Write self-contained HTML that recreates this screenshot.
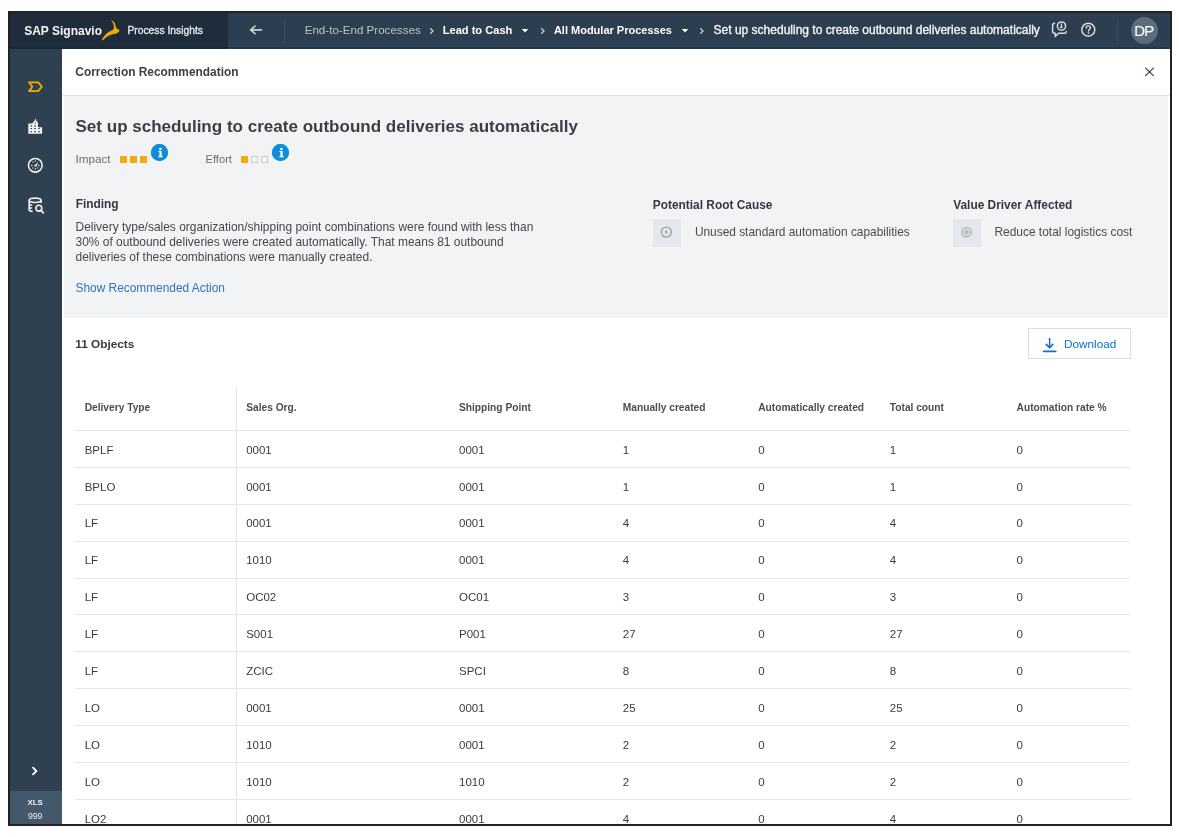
<!DOCTYPE html>
<html><head><meta charset="utf-8">
<style>
*{margin:0;padding:0;box-sizing:border-box}
html,body{width:1179px;height:837px;overflow:hidden;background:#fff;font-family:"Liberation Sans",sans-serif;color:#32363a}
.t{position:absolute;white-space:nowrap;line-height:1}
.r{position:absolute}
.sq{position:absolute;width:7px;height:7px;background:#f3a90f}
.sqo{position:absolute;width:7px;height:7px;border:1px solid #c9cbcd;background:#f4f5f6}
.info{position:absolute;width:17px;height:17px;border-radius:50%;background:#1b90d8}
.ibox{position:absolute;width:28px;height:28px;background:#e4e7eb}
.hl{position:absolute;left:75px;width:1055px;height:1px;background:#e5e6e7}
</style></head><body>
<div id="app" style="position:absolute;left:0;top:0;width:1179px;height:837px;will-change:transform">
<div class="r" style="left:10px;top:13px;width:1160px;height:36px;background:#2d3e50"></div>
<div class="r" style="left:10px;top:13px;width:218px;height:36px;background:#1e2c3c"></div>
<div class="r" style="left:10px;top:49px;width:52px;height:776px;background:#2f4051"></div>
<div class="r" style="left:10px;top:791px;width:52px;height:34px;background:#44586c"></div>
<div class="t" style="left:27.5px;top:799px;font-size:7.9px;font-weight:bold;color:#eef1f4;">XLS</div>

<div class="t" style="left:27.9px;top:812px;font-size:8.75px;color:#e6eaee;">999</div>

<div class="r" style="left:228px;top:42px;width:942px;height:5px;background:#2f4255"></div>
<div class="r" style="left:228px;top:47px;width:942px;height:2px;background:#28394b"></div>
<div class="r" style="left:10px;top:47px;width:218px;height:2px;background:#1a2735"></div>
<div class="r" style="left:62px;top:95px;width:1108px;height:1px;background:#dfe1e4"></div>
<div class="r" style="left:64px;top:96px;width:1104px;height:222px;background:#f2f3f5"></div>
<div class="t" style="left:24.2px;top:25px;font-size:12px;font-weight:bold;color:#f4f6f8;">SAP Signavio</div>

<div class="t" style="left:127.4px;top:26px;font-size:10.3px;color:#e6ebef;-webkit-text-stroke:0.3px #e6ebef">Process Insights</div>

<div class="t" style="left:304.7px;top:24px;font-size:11.6px;color:#b9c3cc;">End-to-End Processes</div>

<div class="t" style="left:442.7px;top:25px;font-size:11.1px;font-weight:bold;color:#ffffff;">Lead to Cash</div>

<div class="t" style="left:553.9px;top:25px;font-size:11.0px;font-weight:bold;color:#ffffff;">All Modular Processes</div>

<div class="t" style="left:713.6px;top:24px;font-size:12px;color:#f2f5f7;-webkit-text-stroke:0.35px #f2f5f7">Set up scheduling to create outbound deliveries automatically</div>

<div class="r" style="left:284px;top:19px;width:1px;height:24px;background:#3a4b5c"></div>
<div class="r" style="left:1117px;top:19px;width:1px;height:24px;background:#3a4b5c"></div>
<div class="r" style="left:1131px;top:17px;width:27px;height:27px;border-radius:50%;background:#5b6c7d"></div>
<div class="t" style="left:1134.2px;top:23px;font-size:15px;color:#f4f6f8;letter-spacing:-0.8px;-webkit-text-stroke:0.2px #f4f6f8">DP</div>

<div class="t" style="left:75.3px;top:67px;font-size:11.9px;font-weight:bold;color:#3a3f45;">Correction Recommendation</div>

<div class="t" style="left:75.5px;top:118px;font-size:17.05px;font-weight:bold;color:#3a3f45;">Set up scheduling to create outbound deliveries automatically</div>

<div class="t" style="left:75.5px;top:153px;font-size:11.7px;color:#6a6d70;">Impact</div>

<div class="t" style="left:205.6px;top:154px;font-size:11.1px;color:#6a6d70;">Effort</div>

<div class="sq" style="left:119.5px;top:156px"></div>
<div class="sq" style="left:129.8px;top:156px"></div>
<div class="sq" style="left:140px;top:156px"></div>
<div class="sq" style="left:241.3px;top:156px"></div>
<div class="sqo" style="left:251.4px;top:156px"></div>
<div class="sqo" style="left:261px;top:156px"></div>
<div class="info" style="left:151.2px;top:143.8px"></div>
<div class="info" style="left:272.2px;top:143.8px"></div>
<div class="t" style="left:75.7px;top:199px;font-size:11.9px;font-weight:bold;color:#363a40;">Finding</div>

<div class="t" style="left:75.5px;top:222px;font-size:11.96px;color:#44484d;">Delivery type/sales organization/shipping point combinations were found with less than</div>

<div class="t" style="left:75.5px;top:237px;font-size:11.96px;color:#44484d;">30% of outbound deliveries were created automatically. That means 81 outbound</div>

<div class="t" style="left:75.5px;top:252px;font-size:11.96px;color:#44484d;">deliveries of these combinations were manually created.</div>

<div class="t" style="left:75.5px;top:283px;font-size:11.9px;color:#3171bd;">Show Recommended Action</div>

<div class="t" style="left:652.8px;top:200px;font-size:11.9px;font-weight:bold;color:#363a40;">Potential Root Cause</div>

<div class="ibox" style="left:653px;top:218.5px"></div>
<div class="t" style="left:694.9px;top:227px;font-size:11.9px;color:#484c50;">Unused standard automation capabilities</div>

<div class="t" style="left:953.2px;top:200px;font-size:11.9px;font-weight:bold;color:#363a40;">Value Driver Affected</div>

<div class="ibox" style="left:953px;top:218.5px"></div>
<div class="t" style="left:994.4px;top:227px;font-size:11.94px;color:#484c50;">Reduce total logistics cost</div>

<div class="t" style="left:75.3px;top:339px;font-size:11.8px;font-weight:bold;color:#363a40;">11 Objects</div>

<div class="r" style="left:1028px;top:328px;width:103px;height:31px;border:1px solid #dcdddf;background:#fff"></div>
<div class="t" style="left:1064px;top:338px;font-size:11.76px;color:#0a6ed1;">Download</div>

<div class="t" style="left:84.7px;top:403px;font-size:10.2px;font-weight:bold;color:#4a4e53;">Delivery Type</div>

<div class="t" style="left:246.2px;top:403px;font-size:10.2px;font-weight:bold;color:#4a4e53;">Sales Org.</div>

<div class="t" style="left:459px;top:403px;font-size:10.2px;font-weight:bold;color:#4a4e53;">Shipping Point</div>

<div class="t" style="left:622.8px;top:403px;font-size:10.2px;font-weight:bold;color:#4a4e53;">Manually created</div>

<div class="t" style="left:758.2px;top:403px;font-size:10.2px;font-weight:bold;color:#4a4e53;">Automatically created</div>

<div class="t" style="left:889.8px;top:403px;font-size:10.2px;font-weight:bold;color:#4a4e53;">Total count</div>

<div class="t" style="left:1016.6px;top:403px;font-size:10.2px;font-weight:bold;color:#4a4e53;">Automation rate %</div>

<div class="r" style="left:235.5px;top:387px;width:1px;height:438px;background:#e5e6e7"></div>
<div class="hl" style="top:429.8px"></div>
<div class="hl" style="top:466.7px"></div>
<div class="hl" style="top:503.6px"></div>
<div class="hl" style="top:540.6px"></div>
<div class="hl" style="top:577.5px"></div>
<div class="hl" style="top:614.4px"></div>
<div class="hl" style="top:651.3px"></div>
<div class="hl" style="top:688.2px"></div>
<div class="hl" style="top:725.2px"></div>
<div class="hl" style="top:762.1px"></div>
<div class="hl" style="top:799.0px"></div>
<div class="t" style="left:84.7px;top:445px;font-size:11.5px;color:#383c40;">BPLF</div>

<div class="t" style="left:246.2px;top:445px;font-size:11.5px;color:#383c40;">0001</div>

<div class="t" style="left:459px;top:445px;font-size:11.5px;color:#383c40;">0001</div>

<div class="t" style="left:622.8px;top:445px;font-size:11.5px;color:#383c40;">1</div>

<div class="t" style="left:758.2px;top:445px;font-size:11.5px;color:#383c40;">0</div>

<div class="t" style="left:889.8px;top:445px;font-size:11.5px;color:#383c40;">1</div>

<div class="t" style="left:1016.6px;top:445px;font-size:11.5px;color:#383c40;">0</div>

<div class="t" style="left:84.7px;top:482px;font-size:11.5px;color:#383c40;">BPLO</div>

<div class="t" style="left:246.2px;top:482px;font-size:11.5px;color:#383c40;">0001</div>

<div class="t" style="left:459px;top:482px;font-size:11.5px;color:#383c40;">0001</div>

<div class="t" style="left:622.8px;top:482px;font-size:11.5px;color:#383c40;">1</div>

<div class="t" style="left:758.2px;top:482px;font-size:11.5px;color:#383c40;">0</div>

<div class="t" style="left:889.8px;top:482px;font-size:11.5px;color:#383c40;">1</div>

<div class="t" style="left:1016.6px;top:482px;font-size:11.5px;color:#383c40;">0</div>

<div class="t" style="left:84.7px;top:518px;font-size:11.5px;color:#383c40;">LF</div>

<div class="t" style="left:246.2px;top:518px;font-size:11.5px;color:#383c40;">0001</div>

<div class="t" style="left:459px;top:518px;font-size:11.5px;color:#383c40;">0001</div>

<div class="t" style="left:622.8px;top:518px;font-size:11.5px;color:#383c40;">4</div>

<div class="t" style="left:758.2px;top:518px;font-size:11.5px;color:#383c40;">0</div>

<div class="t" style="left:889.8px;top:518px;font-size:11.5px;color:#383c40;">4</div>

<div class="t" style="left:1016.6px;top:518px;font-size:11.5px;color:#383c40;">0</div>

<div class="t" style="left:84.7px;top:555px;font-size:11.5px;color:#383c40;">LF</div>

<div class="t" style="left:246.2px;top:555px;font-size:11.5px;color:#383c40;">1010</div>

<div class="t" style="left:459px;top:555px;font-size:11.5px;color:#383c40;">0001</div>

<div class="t" style="left:622.8px;top:555px;font-size:11.5px;color:#383c40;">4</div>

<div class="t" style="left:758.2px;top:555px;font-size:11.5px;color:#383c40;">0</div>

<div class="t" style="left:889.8px;top:555px;font-size:11.5px;color:#383c40;">4</div>

<div class="t" style="left:1016.6px;top:555px;font-size:11.5px;color:#383c40;">0</div>

<div class="t" style="left:84.7px;top:592px;font-size:11.5px;color:#383c40;">LF</div>

<div class="t" style="left:246.2px;top:592px;font-size:11.5px;color:#383c40;">OC02</div>

<div class="t" style="left:459px;top:592px;font-size:11.5px;color:#383c40;">OC01</div>

<div class="t" style="left:622.8px;top:592px;font-size:11.5px;color:#383c40;">3</div>

<div class="t" style="left:758.2px;top:592px;font-size:11.5px;color:#383c40;">0</div>

<div class="t" style="left:889.8px;top:592px;font-size:11.5px;color:#383c40;">3</div>

<div class="t" style="left:1016.6px;top:592px;font-size:11.5px;color:#383c40;">0</div>

<div class="t" style="left:84.7px;top:629px;font-size:11.5px;color:#383c40;">LF</div>

<div class="t" style="left:246.2px;top:629px;font-size:11.5px;color:#383c40;">S001</div>

<div class="t" style="left:459px;top:629px;font-size:11.5px;color:#383c40;">P001</div>

<div class="t" style="left:622.8px;top:629px;font-size:11.5px;color:#383c40;">27</div>

<div class="t" style="left:758.2px;top:629px;font-size:11.5px;color:#383c40;">0</div>

<div class="t" style="left:889.8px;top:629px;font-size:11.5px;color:#383c40;">27</div>

<div class="t" style="left:1016.6px;top:629px;font-size:11.5px;color:#383c40;">0</div>

<div class="t" style="left:84.7px;top:666px;font-size:11.5px;color:#383c40;">LF</div>

<div class="t" style="left:246.2px;top:666px;font-size:11.5px;color:#383c40;">ZCIC</div>

<div class="t" style="left:459px;top:666px;font-size:11.5px;color:#383c40;">SPCI</div>

<div class="t" style="left:622.8px;top:666px;font-size:11.5px;color:#383c40;">8</div>

<div class="t" style="left:758.2px;top:666px;font-size:11.5px;color:#383c40;">0</div>

<div class="t" style="left:889.8px;top:666px;font-size:11.5px;color:#383c40;">8</div>

<div class="t" style="left:1016.6px;top:666px;font-size:11.5px;color:#383c40;">0</div>

<div class="t" style="left:84.7px;top:703px;font-size:11.5px;color:#383c40;">LO</div>

<div class="t" style="left:246.2px;top:703px;font-size:11.5px;color:#383c40;">0001</div>

<div class="t" style="left:459px;top:703px;font-size:11.5px;color:#383c40;">0001</div>

<div class="t" style="left:622.8px;top:703px;font-size:11.5px;color:#383c40;">25</div>

<div class="t" style="left:758.2px;top:703px;font-size:11.5px;color:#383c40;">0</div>

<div class="t" style="left:889.8px;top:703px;font-size:11.5px;color:#383c40;">25</div>

<div class="t" style="left:1016.6px;top:703px;font-size:11.5px;color:#383c40;">0</div>

<div class="t" style="left:84.7px;top:740px;font-size:11.5px;color:#383c40;">LO</div>

<div class="t" style="left:246.2px;top:740px;font-size:11.5px;color:#383c40;">1010</div>

<div class="t" style="left:459px;top:740px;font-size:11.5px;color:#383c40;">0001</div>

<div class="t" style="left:622.8px;top:740px;font-size:11.5px;color:#383c40;">2</div>

<div class="t" style="left:758.2px;top:740px;font-size:11.5px;color:#383c40;">0</div>

<div class="t" style="left:889.8px;top:740px;font-size:11.5px;color:#383c40;">2</div>

<div class="t" style="left:1016.6px;top:740px;font-size:11.5px;color:#383c40;">0</div>

<div class="t" style="left:84.7px;top:777px;font-size:11.5px;color:#383c40;">LO</div>

<div class="t" style="left:246.2px;top:777px;font-size:11.5px;color:#383c40;">1010</div>

<div class="t" style="left:459px;top:777px;font-size:11.5px;color:#383c40;">1010</div>

<div class="t" style="left:622.8px;top:777px;font-size:11.5px;color:#383c40;">2</div>

<div class="t" style="left:758.2px;top:777px;font-size:11.5px;color:#383c40;">0</div>

<div class="t" style="left:889.8px;top:777px;font-size:11.5px;color:#383c40;">2</div>

<div class="t" style="left:1016.6px;top:777px;font-size:11.5px;color:#383c40;">0</div>

<div class="t" style="left:84.7px;top:814px;font-size:11.5px;color:#383c40;">LO2</div>

<div class="t" style="left:246.2px;top:814px;font-size:11.5px;color:#383c40;">0001</div>

<div class="t" style="left:459px;top:814px;font-size:11.5px;color:#383c40;">0001</div>

<div class="t" style="left:622.8px;top:814px;font-size:11.5px;color:#383c40;">4</div>

<div class="t" style="left:758.2px;top:814px;font-size:11.5px;color:#383c40;">0</div>

<div class="t" style="left:889.8px;top:814px;font-size:11.5px;color:#383c40;">4</div>

<div class="t" style="left:1016.6px;top:814px;font-size:11.5px;color:#383c40;">0</div>

<svg class="r" style="left:98px;top:17px;" width="26" height="26" viewBox="0 0 26 26"><path d="M13 3.6 C14.8 3.9 16.3 5 17 6.8 C17.6 8.4 17.8 10 18.6 11.4 L21.8 13.3 L20.2 15.2 L18.8 16.6 C16.5 17 14.5 17.3 12.5 18 C10.2 18.7 8.2 20 6.8 21.4 L4.6 23.6 L3.8 22.6 C5 20.6 6.3 18.6 8 17 C10 15.2 12.3 13.9 14.8 13 C15.9 12 16.1 10.5 15.9 9 C15.6 7 14.6 5 13 3.6 Z" fill="#f0ab00"/></svg>
<svg class="r" style="left:246px;top:22px;" width="20" height="16" viewBox="0 0 20 16"><path d="M9 4.2 L4.6 7.9 L9 11.7 M4.8 7.9 H15.4" fill="none" stroke="#c5cdd5" stroke-width="1.7" stroke-linecap="round" stroke-linejoin="round"/></svg>
<svg class="r" style="left:428.8px;top:27px;" width="6" height="8" viewBox="0 0 6 8"><path d="M1.6 1.6 L4 4 L1.6 6.4" fill="none" stroke="#d0d6dc" stroke-width="1.3" stroke-linecap="round"/></svg>
<svg class="r" style="left:540.4px;top:27px;" width="6" height="8" viewBox="0 0 6 8"><path d="M1.6 1.6 L4 4 L1.6 6.4" fill="none" stroke="#d0d6dc" stroke-width="1.3" stroke-linecap="round"/></svg>
<svg class="r" style="left:699.3px;top:27px;" width="6" height="8" viewBox="0 0 6 8"><path d="M1.6 1.6 L4 4 L1.6 6.4" fill="none" stroke="#d0d6dc" stroke-width="1.3" stroke-linecap="round"/></svg>
<svg class="r" style="left:520.6px;top:27px;" width="8" height="7" viewBox="0 0 8 7"><path d="M0.8 2 H7.2 L4 5.6 Z" fill="#ffffff"/></svg>
<svg class="r" style="left:680.8px;top:27px;" width="8" height="7" viewBox="0 0 8 7"><path d="M0.8 2 H7.2 L4 5.6 Z" fill="#ffffff"/></svg>
<svg class="r" style="left:1050px;top:19px;" width="20" height="20" viewBox="0 0 20 20"><circle cx="11.5" cy="7" r="4.1" fill="none" stroke="#d5dce2" stroke-width="1.5"/><path d="M11.4 4.6 V8.2 M9.9 8.3 H12.6" fill="none" stroke="#d5dce2" stroke-width="1.2"/><path d="M4.6 4.2 C3.2 4.4 2.6 5 2.6 6.4 V12.6 C2.6 13.6 3.3 14.2 4.6 14.2 L5.2 14.2 L5.2 17.4 L8.6 14.2 H14.6 C15.8 14.2 16.2 13.6 16.2 12.4" fill="none" stroke="#d5dce2" stroke-width="1.5" stroke-linejoin="round" stroke-linecap="round"/></svg>
<svg class="r" style="left:1079px;top:20px;" width="19" height="19" viewBox="0 0 19 19"><circle cx="9.3" cy="9.7" r="6.5" fill="none" stroke="#d5dce2" stroke-width="1.5"/><path d="M7.2 8 C7.2 6.6 8.2 5.9 9.3 5.9 C10.5 5.9 11.4 6.7 11.4 7.8 C11.4 9.2 9.5 9.4 9.5 11.1" fill="none" stroke="#d5dce2" stroke-width="1.4" stroke-linecap="round"/><circle cx="9.5" cy="13.1" r="0.9" fill="#d5dce2"/></svg>
<svg class="r" style="left:25px;top:79px;" width="20" height="15" viewBox="0 0 20 15"><path d="M4 3.3 H13.1 L16.9 7.7 L13.1 12.1 H4 L7.3 7.7 Z" fill="none" stroke="#f0ab00" stroke-width="1.8" stroke-linejoin="round"/></svg>
<svg class="r" style="left:24px;top:114px;" width="24" height="24" viewBox="0 0 24 24"><path d="M11.5 4 L12.2 6.8 C13.4 7.5 14 8.6 14 10 V13.2 H18.1 V19.8 H4.3 V9.6 H8.6 C8.9 8.3 9.7 7.2 10.8 6.8 Z" fill="#f2f4f6"/><g fill="#3a4a5a"><rect x="6.5" y="11.2" width="1.6" height="1.4"/><rect x="10.3" y="11.2" width="1.6" height="1.4"/><rect x="10.7" y="8.3" width="1.2" height="1.2"/><rect x="6.5" y="14" width="1.6" height="1.2"/><rect x="10.3" y="14" width="1.6" height="1.2"/><rect x="14.2" y="14" width="1.6" height="1.2"/><rect x="6.5" y="17" width="1.6" height="1.3"/><rect x="10.3" y="17" width="1.6" height="1.3"/><rect x="14.2" y="17" width="1.6" height="1.3"/></g></svg>
<svg class="r" style="left:24px;top:153px;" width="24" height="24" viewBox="0 0 24 24"><circle cx="11.3" cy="12.25" r="6.85" fill="none" stroke="#eef1f4" stroke-width="1.55"/><path d="M9.9 13 L14.2 8.8 L12.3 14.1 Z" fill="#eef1f4"/><g fill="#c9d0d7"><circle cx="7.8" cy="12.4" r="0.8"/><circle cx="14.8" cy="12.4" r="0.8"/><circle cx="9" cy="9" r="0.7"/><circle cx="11.3" cy="8" r="0.7"/><circle cx="8.8" cy="14.9" r="0.7"/><circle cx="11.3" cy="15.9" r="0.8"/><circle cx="13.8" cy="14.9" r="0.7"/></g></svg>
<svg class="r" style="left:24px;top:193px;" width="24" height="24" viewBox="0 0 24 24"><ellipse cx="11.1" cy="7.3" rx="5.9" ry="2.2" fill="none" stroke="#eef1f4" stroke-width="1.7"/><path d="M5.2 7.3 V16.8 C5.2 17.7 6.6 18.3 8.6 18.5" fill="none" stroke="#eef1f4" stroke-width="1.7"/><path d="M17 7.3 V10" fill="none" stroke="#eef1f4" stroke-width="1.7"/><path d="M5.6 12 H8.2 M5.6 15 H8.2" stroke="#eef1f4" stroke-width="1.3"/><circle cx="14.9" cy="15.2" r="2.9" fill="none" stroke="#eef1f4" stroke-width="1.6"/><path d="M16.9 17.3 L19.4 19.9" stroke="#eef1f4" stroke-width="1.7" stroke-linecap="round"/></svg>
<svg class="r" style="left:29px;top:765px;" width="12" height="12" viewBox="0 0 12 12"><path d="M4 2.6 L7.4 6 L4 9.4" fill="none" stroke="#ffffff" stroke-width="1.8" stroke-linecap="round" stroke-linejoin="round"/></svg>
<svg class="r" style="left:1141px;top:63px;" width="17" height="17" viewBox="0 0 17 17"><path d="M4.6 5.1 L12.4 12.6 M12.4 5.1 L4.6 12.6" stroke="#3b4a58" stroke-width="1.3" stroke-linecap="round"/></svg>
<svg class="r" style="left:151.1px;top:143.9px;" width="17" height="17" viewBox="0 0 17 17"><circle cx="8.5" cy="8.5" r="8.5" fill="#0e8dd9"/><circle cx="9.4" cy="5" r="1.25" fill="#fff"/><path d="M7.4 7 H10.6 V12.2 H11.8 V13.3 H7.2 V12.2 H8.4 V8.1 H7.4 Z" fill="#fff"/></svg>
<svg class="r" style="left:272.2px;top:143.9px;" width="17" height="17" viewBox="0 0 17 17"><circle cx="8.5" cy="8.5" r="8.5" fill="#0e8dd9"/><circle cx="9.4" cy="5" r="1.25" fill="#fff"/><path d="M7.4 7 H10.6 V12.2 H11.8 V13.3 H7.2 V12.2 H8.4 V8.1 H7.4 Z" fill="#fff"/></svg>
<svg class="r" style="left:658px;top:224px;" width="17" height="17" viewBox="0 0 17 17"><circle cx="8.3" cy="8.1" r="5" fill="none" stroke="#9aa1a8" stroke-width="1.4"/><path d="M9.2 4.8 L6.4 8.6 H8.3 L7.4 11.4 L10.2 7.6 H8.3 Z" fill="#9aa1a8"/></svg>
<svg class="r" style="left:958px;top:224px;" width="17" height="17" viewBox="0 0 17 17"><circle cx="8.6" cy="8.1" r="5.4" fill="#b6bcc3"/><circle cx="8.6" cy="8.1" r="3.6" fill="#dfe3e7"/><circle cx="8.6" cy="8.1" r="2.2" fill="#a9b0b7"/><circle cx="8.6" cy="8.1" r="0.9" fill="#dfe3e7"/></svg>
<svg class="r" style="left:1038px;top:332px;" width="24" height="24" viewBox="0 0 24 24"><path d="M11.6 6 V15.3" stroke="#1b6bc4" stroke-width="1.5"/><path d="M8.3 12.3 L11.6 15.6 L14.9 12.3" fill="none" stroke="#1b6bc4" stroke-width="1.7" stroke-linecap="round" stroke-linejoin="round"/><path d="M5.6 19.4 H17.8" stroke="#1b6bc4" stroke-width="1.6" stroke-linecap="round"/></svg>
<div class="r" style="left:8px;top:11px;width:1164px;height:815px;border:2px solid #222"></div>
</div>
</body></html>
